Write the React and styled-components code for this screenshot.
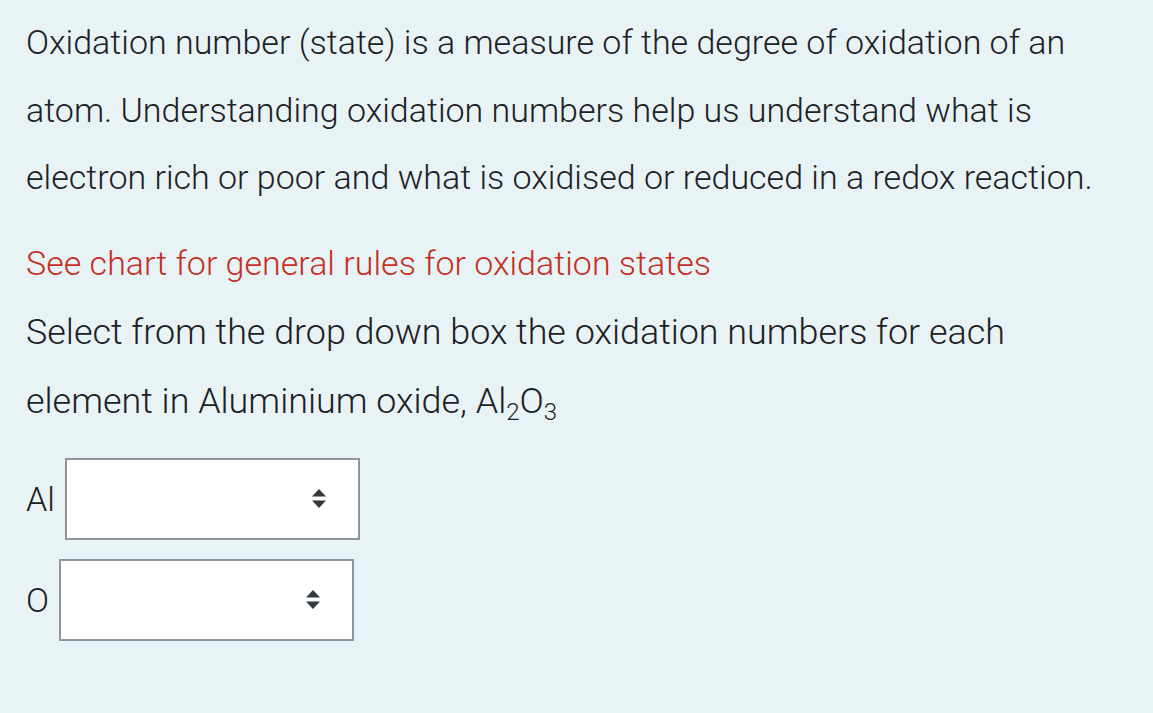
import styled, { createGlobalStyle } from 'styled-components';

const Global = createGlobalStyle`
  html, body {
    margin: 0;
    padding: 0;
    background: #e7f3f5;
  }
  body {
    font-family: Roboto, "Liberation Sans", sans-serif;
    font-weight: 300;
    color: #1d2125;
  }
`;

const Page = styled.div`
  min-height: 713px;
  padding: 9px 50px 0 26px;
  box-sizing: border-box;
  background: #e7f3f5;
  font-size: 34px;
  line-height: 69px;
`;

const Para = styled.p`
  margin: 0 0 ${p => p.$gap || 0}px 0;
  font-size: ${p => p.$size || 34}px;
  line-height: ${p => p.$lh || 69}px;
`;

const ChartLink = styled.p`
  margin: 0;
  color: #c62e1f;
`;

const Sub = styled.sub`
  font-size: 24px;
  line-height: 1;
  vertical-align: -7px;
`;

const Answers = styled.div`
  display: flex;
  flex-direction: column;
  gap: 19px;
  margin-top: 22px;
`;

const Row = styled.label`
  display: flex;
  align-items: center;
  gap: 10px;
  line-height: 1;
`;

const SelectBox = styled.div`
  width: 295px;
  height: 82px;
  box-sizing: border-box;
  border: 2px solid #8f959e;
  background: #fff;
  display: flex;
  align-items: center;
  justify-content: flex-end;
  padding-right: 32px;
`;

const Arrows = () => (
  <svg width="14" height="19" viewBox="0 0 14 19">
    <path d="M7 0 L14 7.5 L0 7.5 Z" fill="#343a40" />
    <path d="M7 19 L14 11.5 L0 11.5 Z" fill="#343a40" />
  </svg>
);

const Answer = ({ label }) => (
  <Row>
    <span>{label}</span>
    <SelectBox>
      <Arrows />
    </SelectBox>
  </Row>
);

const App = () => {
  return (
    <Page>
      <Global />
      <Para $gap={17} $lh={67.5}>
        Oxidation number (state) is a measure of the degree of oxidation of an atom.
        Understanding oxidation numbers help us understand what is electron rich or poor
        and what is oxidised or reduced in a redox reaction.
      </Para>
      <ChartLink>See chart for general rules for oxidation states</ChartLink>
      <Para $size={35.9}>
        Select from the drop down box the oxidation numbers for each element in
        Aluminium oxide, Al<Sub>2</Sub>O<Sub>3</Sub>
      </Para>
      <Answers>
        <Answer label="Al" />
        <Answer label="O" />
      </Answers>
    </Page>
  );
};

export default App;
